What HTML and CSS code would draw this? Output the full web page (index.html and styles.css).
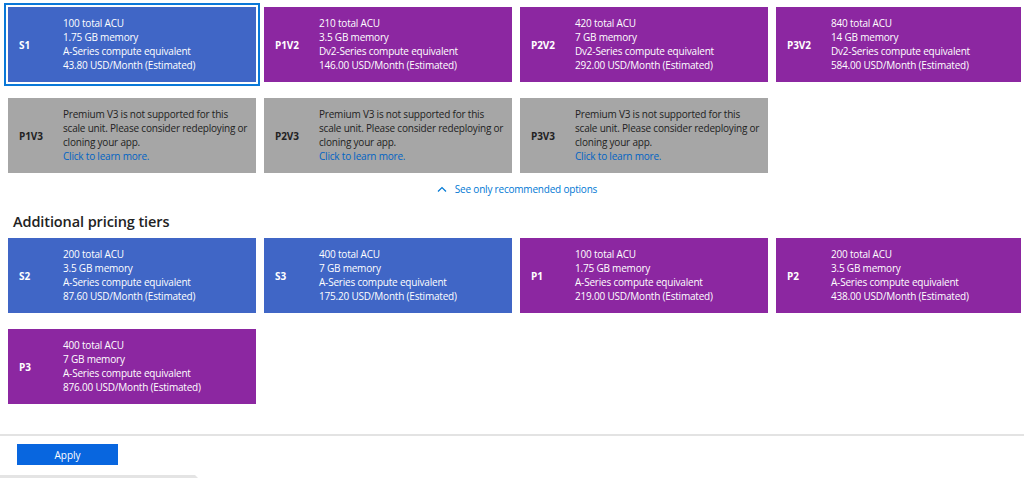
FILE: index.html
```html
<!DOCTYPE html>
<html>
<head>
<meta charset="utf-8">
<link rel="stylesheet" href="styles.css">
</head>
<body>
<div class="page">
  <div class="grid">
    <div class="card blue selected">
      <div class="name">S1</div>
      <div class="info"><div>100 total ACU</div><div>1.75 GB memory</div><div>A-Series compute equivalent</div><div>43.80 USD/Month (Estimated)</div></div>
    </div>
    <div class="card purple">
      <div class="name">P1V2</div>
      <div class="info"><div>210 total ACU</div><div>3.5 GB memory</div><div>Dv2-Series compute equivalent</div><div>146.00 USD/Month (Estimated)</div></div>
    </div>
    <div class="card purple">
      <div class="name">P2V2</div>
      <div class="info"><div>420 total ACU</div><div>7 GB memory</div><div>Dv2-Series compute equivalent</div><div>292.00 USD/Month (Estimated)</div></div>
    </div>
    <div class="card purple">
      <div class="name">P3V2</div>
      <div class="info"><div>840 total ACU</div><div>14 GB memory</div><div>Dv2-Series compute equivalent</div><div>584.00 USD/Month (Estimated)</div></div>
    </div>
    <div class="card gray">
      <div class="name">P1V3</div>
      <div class="info"><div>Premium V3 is not supported for this</div><div>scale unit. Please consider redeploying or</div><div>cloning your app.</div><div class="link">Click to learn more.</div></div>
    </div>
    <div class="card gray">
      <div class="name">P2V3</div>
      <div class="info"><div>Premium V3 is not supported for this</div><div>scale unit. Please consider redeploying or</div><div>cloning your app.</div><div class="link">Click to learn more.</div></div>
    </div>
    <div class="card gray">
      <div class="name">P3V3</div>
      <div class="info"><div>Premium V3 is not supported for this</div><div>scale unit. Please consider redeploying or</div><div>cloning your app.</div><div class="link">Click to learn more.</div></div>
    </div>
  </div>

  <div class="toggle">
    <svg class="chev" width="10" height="6" viewBox="0 0 10 6"><path d="M1 5.5 L5 1.5 L9 5.5" fill="none" stroke="#0078d4" stroke-width="1.2"/></svg>
    <span>See only recommended options</span>
  </div>

  <h2 class="heading">Additional pricing tiers</h2>

  <div class="grid">
    <div class="card blue">
      <div class="name">S2</div>
      <div class="info"><div>200 total ACU</div><div>3.5 GB memory</div><div>A-Series compute equivalent</div><div>87.60 USD/Month (Estimated)</div></div>
    </div>
    <div class="card blue">
      <div class="name">S3</div>
      <div class="info"><div>400 total ACU</div><div>7 GB memory</div><div>A-Series compute equivalent</div><div>175.20 USD/Month (Estimated)</div></div>
    </div>
    <div class="card purple">
      <div class="name">P1</div>
      <div class="info"><div>100 total ACU</div><div>1.75 GB memory</div><div>A-Series compute equivalent</div><div>219.00 USD/Month (Estimated)</div></div>
    </div>
    <div class="card purple">
      <div class="name">P2</div>
      <div class="info"><div>200 total ACU</div><div>3.5 GB memory</div><div>A-Series compute equivalent</div><div>438.00 USD/Month (Estimated)</div></div>
    </div>
    <div class="card purple">
      <div class="name">P3</div>
      <div class="info"><div>400 total ACU</div><div>7 GB memory</div><div>A-Series compute equivalent</div><div>876.00 USD/Month (Estimated)</div></div>
    </div>
  </div>

  <div class="footer">
    <button class="apply">Apply</button>
  </div>
  <div class="scrollbar"></div>
</div>
</body>
</html>
```

FILE: styles.css
```css
html, body {
  margin: 0;
  padding: 0;
  background: #fff;
  overflow: hidden;
}
body {
  font-family: "Open Sans", "Noto Sans", "Liberation Sans", sans-serif;
  font-size: 10px;
  color: #fff;
}
.page {
  width: 1024px;
  height: 478px;
  position: relative;
}
.grid {
  display: grid;
  grid-template-columns: repeat(3, 248px) 245px;
  column-gap: 8px;
  row-gap: 16px;
  padding-left: 8px;
}
.page > .grid:first-child {
  padding-top: 7px;
}
.card {
  height: 75px;
  display: flex;
  align-items: center;
  box-sizing: border-box;
}
.card.blue { background: #4066c6; }
.card.purple { background: #8c27a1; }
.card.gray { background: #a6a6a6; color: #222; }
.card.selected {
  outline: 2px solid #0a78d8;
  outline-offset: 2px;
}
.name {
  width: 55px;
  padding-left: 11px;
  box-sizing: border-box;
  font-weight: 700;
  flex: none;
  letter-spacing: -0.1px;
}
.info {
  line-height: 14px;
  white-space: nowrap;
  letter-spacing: -0.2px;
  margin-top: -1px;
}
.link {
  color: #0063c4;
}
.toggle {
  margin-top: 8px;
  height: 16px;
  display: flex;
  align-items: center;
  justify-content: center;
  gap: 8px;
  color: #0078d4;
  padding-left: 10px;
  letter-spacing: -0.2px;
}
.chev { display: block; }
.heading {
  margin: 15px 0 6px 13px;
  font-size: 14.5px;
  line-height: 20px;
  font-weight: 600;
  color: #222;
  letter-spacing: -0.1px;
}
.footer {
  margin-top: 30px;
  border-top: 2px solid #e3e3e3;
  padding: 8px 0 0 17px;
}
.apply {
  width: 101px;
  height: 21px;
  background: #0866df;
  color: #fff;
  border: none;
  font-family: "Open Sans", "Noto Sans", sans-serif;
  font-size: 10px;
  padding: 0;
  display: block;
}
.scrollbar {
  position: absolute;
  left: 0;
  bottom: 0;
  width: 198px;
  height: 3px;
  background: #e4e4e4;
  clip-path: polygon(0 0, 195px 0, 198px 100%, 0 100%);
}
```
